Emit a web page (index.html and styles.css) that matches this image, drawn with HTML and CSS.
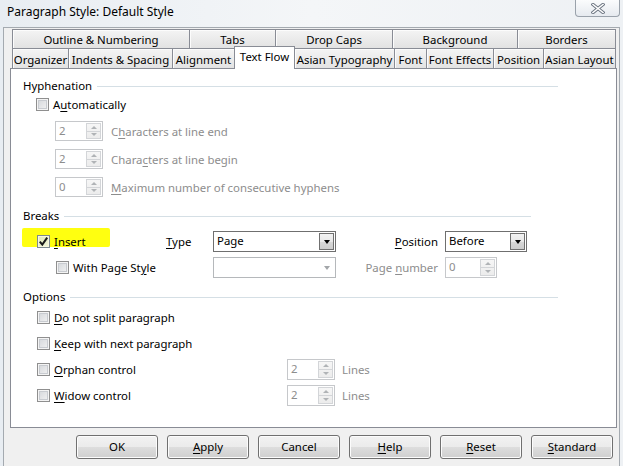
FILE: index.html
```html
<!DOCTYPE html>
<html>
<head>
<meta charset="utf-8">
<link rel="stylesheet" href="styles.css">
</head>
<body>
<div class="window">
  <div class="titlebar">
    <span class="title">Paragraph Style: Default Style</span>
    <div class="close">
      <svg width="14" height="11" viewBox="0 0 14 11">
        <path d="M2 1.5 L12 9.5 M12 1.5 L2 9.5" stroke="#6b7480" stroke-width="3.4" stroke-linecap="square"/>
        <path d="M2 1.5 L12 9.5 M12 1.5 L2 9.5" stroke="#ffffff" stroke-width="1.6" stroke-linecap="square"/>
      </svg>
    </div>
  </div>
  <div class="client">
    <div class="tabs">
      <div class="tabrow row1">
        <div class="tab">Outline &amp; Numbering</div>
        <div class="tab">Tabs</div>
        <div class="tab">Drop Caps</div>
        <div class="tab">Background</div>
        <div class="tab">Borders</div>
      </div>
      <div class="tabrow row2">
        <div class="tab">Organizer</div>
        <div class="tab">Indents &amp; Spacing</div>
        <div class="tab">Alignment</div>
        <div class="tab selected">Text Flow</div>
        <div class="tab">Asian Typography</div>
        <div class="tab">Font</div>
        <div class="tab">Font Effects</div>
        <div class="tab">Position</div>
        <div class="tab">Asian Layout</div>
      </div>
    </div>
    <div class="panel">
      <div class="group-head"><span>Hyphenation</span></div>
      <div class="row check-row"><span class="cb"></span><span>A<u>u</u>tomatically</span></div>
      <div class="spin-list">
        <div class="spin-row"><div class="spin"><span class="val">2</span><span class="spbtn"><i class="up"></i><i class="dn"></i></span></div><span class="dis">C<u>h</u>aracters at line end</span></div>
        <div class="spin-row"><div class="spin"><span class="val">2</span><span class="spbtn"><i class="up"></i><i class="dn"></i></span></div><span class="dis">Chara<u>c</u>ters at line begin</span></div>
        <div class="spin-row"><div class="spin"><span class="val">0</span><span class="spbtn"><i class="up"></i><i class="dn"></i></span></div><span class="dis"><u>M</u>aximum number of consecutive hyphens</span></div>
      </div>

      <div class="group-head short gh-breaks"><span>Breaks</span></div>
      <div class="breaks">
        <div class="cell insert"><span class="highlight"></span><span class="cb checked"><svg width="11" height="11" viewBox="0 0 11 11"><path d="M1.8 5.6 L4.3 8.6 L9.2 1.6" fill="none" stroke="#1a1a1a" stroke-width="2"/></svg></span><span class="lbl"><u>I</u>nsert</span></div>
        <div class="cell tlabel"><span><u>T</u>ype</span></div>
        <div class="combo"><span class="val">Page</span><span class="arrow"><i></i></span></div>
        <div class="cell plabel"><span><u>P</u>osition</span></div>
        <div class="combo small"><span class="val">Before</span><span class="arrow"><i></i></span></div>

        <div class="cell pstyle"><span class="cb"></span><span>With Page St<u>y</u>le</span></div>
        <div class="cell"></div>
        <div class="combo disabled"><span class="val"></span><span class="arrow"><i></i></span></div>
        <div class="cell plabel"><span class="dis">Page <u>n</u>umber</span></div>
        <div class="spin pn"><span class="val">0</span><span class="spbtn"><i class="up"></i><i class="dn"></i></span></div>
      </div>

      <div class="group-head gh-options"><span>Options</span></div>
      <div class="options">
        <div class="opt"><span class="cb"></span><span><u>D</u>o not split paragraph</span></div>
        <div class="opt"><span class="cb"></span><span><u>K</u>eep with next paragraph</span></div>
        <div class="opt"><div class="opt-left"><span class="cb"></span><span><u>O</u>rphan control</span></div><div class="spin sm"><span class="val">2</span><span class="spbtn"><i class="up"></i><i class="dn"></i></span></div><span class="dis lines">Lines</span></div>
        <div class="opt"><div class="opt-left"><span class="cb"></span><span><u>W</u>idow control</span></div><div class="spin sm"><span class="val">2</span><span class="spbtn"><i class="up"></i><i class="dn"></i></span></div><span class="dis lines">Lines</span></div>
      </div>
    </div>
    <div class="buttons">
      <div class="btn">OK</div>
      <div class="btn"><u>A</u>pply</div>
      <div class="btn">Cancel</div>
      <div class="btn"><u>H</u>elp</div>
      <div class="btn"><u>R</u>eset</div>
      <div class="btn"><u>S</u>tandard</div>
    </div>
  </div>
</div>
</body>
</html>
```
FILE: styles.css
```css
* { box-sizing: border-box; }
html, body { margin: 0; padding: 0; }
body {
  width: 623px;
  height: 466px;
  overflow: hidden;
  font-family: "Noto Sans", "Open Sans", sans-serif;
  font-size: 11.4px;
  color: #000;
  background: linear-gradient(90deg, #e8edf2 0%, #f4f6f8 50%, #eef1f4 100%);
}
u { text-decoration: underline; text-underline-offset: 2px; }

.window { width: 623px; height: 466px; display: flex; flex-direction: column; }

.titlebar {
  height: 27px;
  display: flex;
  justify-content: space-between;
  align-items: flex-start;
}
.title { padding: 4px 0 0 7px; line-height: 16px; font-size: 12px; }
.close {
  margin-right: 3px;
  width: 45px;
  height: 17px;
  border: 1px solid #9aa2ab;
  border-top: none;
  border-radius: 0 0 4px 4px;
  background: linear-gradient(#fbfcfd, #e6eaef);
  display: flex;
  align-items: center;
  justify-content: center;
}

.client {
  flex: 1;
  margin: 0 3px;
  border: 1px solid #a4aab0;
  border-bottom: none;
  background: #f0f0f0;
  display: flex;
  flex-direction: column;
}

.tabs { padding: 1px 0 0 8px; }
.tabrow { display: grid; }
.row1 { grid-template-columns: 177px 86px 117px 125px 98px; height: 19px; }
.row2 { grid-template-columns: 56px 104px 62px 60px 100px 32px 67px 50px 72px; height: 20px; }
.tab {
  border: 1px solid #898c95;
  border-bottom: none;
  margin-right: -1px;
  background: linear-gradient(#f4f4f4, #e2e2e2);
  box-shadow: inset 1px 1px 0 #fcfcfc;
  display: flex;
  align-items: center;
  justify-content: center;
  white-space: nowrap;
  line-height: 16px;
}
.row1 .tab { padding-top: 2px; }
.row2 .tab { padding-top: 1px; }
.tab.selected {
  background: #fff;
  box-shadow: none;
  margin-top: -2px;
  height: 23px;
  position: relative;
  z-index: 2;
  padding-top: 0;
  padding-bottom: 3px;
}

.panel {
  margin-left: 6px;
  width: 607px;
  height: 360px;
  border: 1px solid #898c95;
  background: #fff;
  padding: 9px 0 0 12px;
  position: relative;
  z-index: 1;
}

.group-head {
  width: 535px;
  height: 16px;
  display: flex;
  align-items: center;
  line-height: 16px;
}
.group-head::after {
  content: "";
  flex: 1;
  height: 1px;
  background: #d5dfe5;
  margin-left: 5px;
  margin-top: 1px;
}
.group-head.short { width: 508px; }

.row { display: flex; align-items: center; }
.check-row { height: 20px; padding-left: 13px; }

.cb {
  width: 13px;
  height: 13px;
  flex: none;
  border: 1px solid #8f8f8f;
  background: linear-gradient(135deg, #d2d5d9, #f4f4f4);
  box-shadow: inset 0 0 0 1px #f4f4f4, inset 0 0 0 2px #c8cbd0;
  margin-right: 4px;
  display: flex;
  align-items: center;
  justify-content: center;
}
.cb.checked {
  background: linear-gradient(135deg, #dfe8b8, #f2f6d8);
  box-shadow: inset 0 0 0 1px #f8f8e0;
  border-color: #7d8a8f;
}

.dis { color: #8d8d8d; }

.spin-list { padding: 7px 0 0 32px; display: flex; flex-direction: column; gap: 8px; }
.spin-row { display: flex; align-items: center; height: 20px; gap: 8px; }

.spin {
  width: 48px;
  height: 20px;
  border: 1px solid #c6c8cb;
  background: #fff;
  display: flex;
  align-items: stretch;
  justify-content: space-between;
  flex: none;
}
.spin .val { color: #8d8d8d; padding-left: 3px; line-height: 17px; }
.spbtn {
  width: 15px;
  margin: 1px;
  border: 1px solid #d3d5d8;
  display: flex;
  flex-direction: column;
  background: linear-gradient(#f6f6f6, #ececec);
}
.spbtn i {
  flex: 1;
  display: flex;
  align-items: center;
  justify-content: center;
}
.spbtn i + i { border-top: 1px solid #d3d5d8; }
.spbtn i::before {
  content: "";
  width: 0;
  height: 0;
  border-left: 3px solid transparent;
  border-right: 3px solid transparent;
}
.spbtn .up::before { border-bottom: 3px solid #b0b3b6; }
.spbtn .dn::before { border-top: 3px solid #b0b3b6; }

.gh-breaks { margin-top: 11px; }
.breaks {
  margin-top: 7px;
  display: grid;
  grid-template-columns: 143px 47px 123px 109px auto;
  grid-template-rows: 21px 21px;
  row-gap: 5px;
  justify-items: start;
}
.cell { display: flex; align-items: center; height: 21px; }
.insert { padding-left: 14px; position: relative; }
.insert .cb, .insert .lbl { position: relative; z-index: 1; }
.highlight {
  position: absolute;
  left: -1px;
  top: -3px;
  width: 88px;
  height: 19px;
  background: #ffff10;
  border-radius: 2px;
}
.pstyle { padding-left: 33px; }
.plabel { justify-self: end; padding-right: 7px; }

.combo {
  width: 123px;
  height: 21px;
  border: 1px solid #6f6f6f;
  background: #fff;
  display: flex;
  justify-content: space-between;
}
.combo.small { width: 82px; }
.combo .val { padding-left: 3px; line-height: 18px; }
.combo .arrow {
  width: 15px;
  margin: 1px;
  border: 1px solid #707070;
  background: linear-gradient(#f2f2f2 0%, #e8e8e8 50%, #d8d8d8 51%, #cdcdcd 100%);
  display: flex;
  align-items: center;
  justify-content: center;
}
.combo .arrow i {
  width: 0;
  height: 0;
  border-left: 3.5px solid transparent;
  border-right: 3.5px solid transparent;
  border-top: 4px solid #000;
}
.combo.disabled { border-color: #b5b8bb; }
.combo.disabled .arrow { border-color: transparent; background: transparent; }
.combo.disabled .arrow i { border-top-color: #a3a6a9; }
.spin.pn { width: 52px; height: 21px; }

.gh-options { margin-top: 11px; }
.options { display: flex; flex-direction: column; gap: 4px; padding-top: 1px; }
.opt { display: flex; align-items: center; height: 22px; padding-left: 14px; }
.opt-left { display: flex; align-items: center; width: 250px; }
.spin.sm { height: 21px; }
.lines { margin-left: 7px; }

.buttons {
  margin-top: 7px;
  display: flex;
  justify-content: flex-end;
  gap: 9px;
  padding-right: 6px;
}
.btn {
  width: 82px;
  height: 24px;
  border: 1px solid #707070;
  border-radius: 3px;
  background: linear-gradient(#f2f2f2 0%, #ebebeb 50%, #dddddd 51%, #cfcfcf 100%);
  box-shadow: inset 0 0 0 1px #fcfcfc;
  display: flex;
  align-items: center;
  justify-content: center;
  line-height: 16px;
}
```
